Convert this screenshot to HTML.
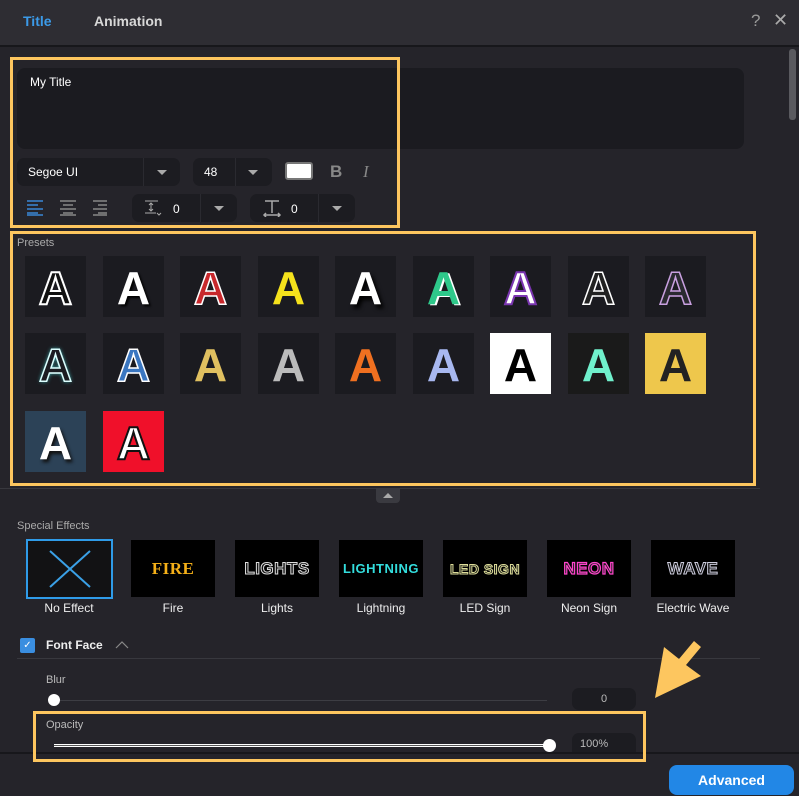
<!DOCTYPE html>
<html><head><meta charset="utf-8"><style>
*{margin:0;padding:0;box-sizing:border-box}
body{width:799px;height:796px;background:#25242a;font-family:"Liberation Sans",sans-serif;color:#ddd;position:relative;overflow:hidden;font-size:12px}
.a{position:absolute}
.yb{position:absolute;border:3px solid #fdc65f}
.fld{position:absolute;background:#1c1c21;border-radius:7px;color:#fff;font-size:12px}
.dv{position:absolute;top:0;bottom:0;width:1px;background:#2a2a30}
.tri{position:absolute;width:0;height:0;border-left:5px solid transparent;border-right:5px solid transparent;border-top:5px solid #aaa}
.t{position:absolute;width:61px;height:61px;background:#1b1b20;display:flex;align-items:center;justify-content:center;font:bold 46px "Liberation Sans",sans-serif;line-height:1;padding-top:2px}
.fx{position:absolute;width:84px;height:57px;background:#000;top:540px;display:flex;align-items:center;justify-content:center;font:bold 17px "Liberation Sans",sans-serif;letter-spacing:0.5px}
.fl{position:absolute;top:601px;width:100px;text-align:center;font-size:12px;color:#eee}
</style></head><body>
<div class="a" style="left:0;top:0;width:799px;height:45px;background:#2e2d33"></div>
<div class="a" style="left:0;top:45px;width:799px;height:2px;background:#17171b"></div>
<div class="a" style="left:23px;top:13px;font-weight:bold;font-size:14px;color:#3b9ae8">Title</div>
<div class="a" style="left:94px;top:13px;font-weight:bold;font-size:14px;color:#d8d8d8">Animation</div>
<div class="a" style="left:751px;top:11px;font-size:17px;color:#999">?</div>
<div class="a" style="left:773px;top:10px;font-size:18px;color:#aaa">✕</div>
<div class="a" style="left:789px;top:49px;width:7px;height:71px;background:#5a5a5f;border-radius:3px"></div>

<div class="a" style="left:17px;top:68px;width:727px;height:81px;background:#1b1b20;border-radius:8px"></div>
<div class="a" style="left:30px;top:75px;color:#fff;font-size:12px">My Title</div>

<div class="fld" style="left:17px;top:158px;width:163px;height:28px"><span class="a" style="left:11px;top:7px">Segoe UI</span><div class="dv" style="left:126px"></div><div class="tri" style="left:140px;top:12px"></div></div>
<div class="fld" style="left:193px;top:158px;width:79px;height:28px"><span class="a" style="left:11px;top:7px">48</span><div class="dv" style="left:42px"></div><div class="tri" style="left:55px;top:12px"></div></div>
<div class="a" style="left:285px;top:162px;width:28px;height:18px;background:#fff;border:2px solid #777;border-radius:3px"></div>
<div class="a" style="left:330px;top:162px;font-weight:bold;font-size:17px;color:#888">B</div>
<div class="a" style="left:363px;top:162px;font-style:italic;font-size:17px;color:#888;font-family:'Liberation Serif',serif">I</div>
<svg class="a" style="left:27px;top:200px" width="80" height="16"><g stroke-width="2"><g stroke="#3a86d6"><path d="M0 1h16M0 5h11M0 9h16M0 13h11M0 15h16" stroke-width="1.5"/></g><g stroke="#888" stroke-width="1.5"><path d="M33 1h16M36 5h10M33 9h16M36 13h10M33 15h16"/><path d="M66 1h16M71 5h11M66 9h16M71 13h11M66 15h16"/></g></g></svg>
<div class="fld" style="left:132px;top:194px;width:105px;height:28px"><svg class="a" style="left:12px;top:6px" width="18" height="16"><path d="M1 1h13M1 13h11M7 3v8M5 5l2-2 2 2M5 9l2 2 2-2M13 13l2 2 2-2" stroke="#aaa" fill="none"/></svg><span class="a" style="left:41px;top:8px">0</span><div class="dv" style="left:68px"></div><div class="tri" style="left:82px;top:12px"></div></div>
<div class="fld" style="left:250px;top:194px;width:105px;height:28px"><svg class="a" style="left:12px;top:5px" width="20" height="18"><path d="M3 2h14M10 2v12M2 16h16M4 14l-2 2 2 2M16 14l2 2-2 2" stroke="#aaa" fill="none" stroke-width="1.5"/></svg><span class="a" style="left:41px;top:8px">0</span><div class="dv" style="left:68px"></div><div class="tri" style="left:82px;top:12px"></div></div>
<div class="yb" style="left:10px;top:57px;width:390px;height:171px"></div>

<div class="a" style="left:17px;top:237px;font-size:11px;color:#aaa">Presets</div>
<div class="t" style="left:25px;top:256px;color:#111;-webkit-text-stroke:2px #fff">A</div>
<div class="t" style="left:103px;top:256px;color:#fff;text-shadow:2px 2px 2px #000">A</div>
<div class="t" style="left:180px;top:256px;color:#c8282c;-webkit-text-stroke:1.5px #fff">A</div>
<div class="t" style="left:258px;top:256px;color:#f5e21c">A</div>
<div class="t" style="left:335px;top:256px;color:#fff;text-shadow:3px 4px 4px #000">A</div>
<div class="t" style="left:413px;top:256px;color:#2ec88a;text-shadow:2px 1px 0 #fff">A</div>
<div class="t" style="left:490px;top:256px;color:#fff;-webkit-text-stroke:2px #7a35b0">A</div>
<div class="t" style="left:568px;top:256px;color:#222;-webkit-text-stroke:1.5px #fff">A</div>
<div class="t" style="left:645px;top:256px;color:#2a2a30;-webkit-text-stroke:1.5px #c9a0e0">A</div>
<div class="t" style="left:25px;top:333px;color:#1c1c22;-webkit-text-stroke:1.5px #dff;text-shadow:0 0 4px #4cc">A</div>
<div class="t" style="left:103px;top:333px;color:#3a76c0;-webkit-text-stroke:1.5px #fff">A</div>
<div class="t" style="left:180px;top:333px;color:#e0c060">A</div>
<div class="t" style="left:258px;top:333px;color:#bbb">A</div>
<div class="t" style="left:335px;top:333px;color:#f07020">A</div>
<div class="t" style="left:413px;top:333px;color:#a8b8f0">A</div>
<div class="t" style="left:490px;top:333px;background:#fff;color:#000">A</div>
<div class="t" style="left:568px;top:333px;background:#1a1a1a;color:#70f0cc">A</div>
<div class="t" style="left:645px;top:333px;background:#eec74c;color:#222">A</div>
<div class="t" style="left:25px;top:411px;background:#2c4257;color:#fff;text-shadow:2px 3px 3px #111">A</div>
<div class="t" style="left:103px;top:411px;background:#f0102a;color:#fff;-webkit-text-stroke:2px #111">A</div>
<div class="yb" style="left:10px;top:231px;width:746px;height:255px"></div>
<div class="a" style="left:0;top:488px;width:760px;height:1px;background:#38383e"></div>
<div class="a" style="left:376px;top:488px;width:24px;height:15px;background:#3a3a40;border-radius:0 0 4px 4px"></div>
<div class="a" style="left:383px;top:493px;width:0;height:0;border-left:5px solid transparent;border-right:5px solid transparent;border-bottom:5px solid #aaa"></div>

<div class="a" style="left:17px;top:520px;font-size:11px;color:#aaa">Special Effects</div>
<div class="fx" style="left:26px;top:539px;width:87px;height:60px;background:#121214;border:2px solid #2f9be8"><svg width="50" height="40"><path d="M5 2l40 36M45 2L5 38" stroke="#3aa0e6" stroke-width="2"/></svg></div>
<div class="fx" style="left:131px;color:#f5b018;font-family:'Liberation Serif',serif">FIRE</div>
<div class="fx" style="left:235px;color:#111;-webkit-text-stroke:1px #ddd">LIGHTS</div>
<div class="fx" style="left:339px;color:#3dd;font-size:13px">LIGHTNING</div>
<div class="fx" style="left:443px;color:#111;-webkit-text-stroke:1px #dd9;font-size:14px">LED SIGN</div>
<div class="fx" style="left:547px;color:#222;-webkit-text-stroke:1.2px #f4c">NEON</div>
<div class="fx" style="left:651px;color:#111;-webkit-text-stroke:1px #ccd">WAVE</div>
<div class="fl" style="left:19px">No Effect</div>
<div class="fl" style="left:123px">Fire</div>
<div class="fl" style="left:227px">Lights</div>
<div class="fl" style="left:331px">Lightning</div>
<div class="fl" style="left:435px">LED Sign</div>
<div class="fl" style="left:539px">Neon Sign</div>
<div class="fl" style="left:643px">Electric Wave</div>

<div class="a" style="left:20px;top:638px;width:15px;height:15px;background:#3a8ee0;border-radius:2px;color:#fff;font-size:10px;text-align:center;line-height:15px">✓</div>
<div class="a" style="left:46px;top:638px;font-weight:bold;font-size:12px;color:#eee">Font Face</div>
<svg class="a" style="left:115px;top:640px" width="14" height="10"><path d="M1 8l6-6 6 6" stroke="#888" fill="none" stroke-width="1.2"/></svg>
<div class="a" style="left:17px;top:658px;width:743px;height:1px;background:#38383e"></div>
<div class="a" style="left:46px;top:674px;font-size:11px;color:#bbb">Blur</div>
<div class="a" style="left:54px;top:700px;width:493px;height:1px;background:#3d3d43"></div>
<div class="a" style="left:48px;top:694px;width:12px;height:12px;border-radius:50%;background:#fff"></div>
<div class="fld" style="left:572px;top:688px;width:64px;height:22px;color:#bbb;text-align:center;line-height:22px;font-size:11px">0</div>

<div class="a" style="left:46px;top:719px;font-size:11px;color:#bbb">Opacity</div>
<div class="a" style="left:54px;top:744px;width:495px;height:3px;background:#fff;border-top:1px solid #fff;border-bottom:1px solid #fff;background:#555"></div>
<div class="a" style="left:543px;top:739px;width:13px;height:13px;border-radius:50%;background:#fff"></div>
<div class="fld" style="left:572px;top:733px;width:64px;height:20px;color:#bbb;line-height:22px;font-size:11px;padding-left:8px;border-radius:7px 7px 0 0">100%</div>
<div class="a" style="left:0;top:752px;width:799px;height:44px;background:#25242a;border-top:2px solid #17171b"></div>
<div class="yb" style="left:33px;top:711px;width:613px;height:51px"></div>
<div class="a" style="left:669px;top:765px;width:125px;height:30px;background:#2287e6;border-radius:8px;color:#fff;font-weight:bold;font-size:14px;text-align:center;line-height:30px">Advanced</div>
<svg class="a" style="left:0;top:0" width="799" height="796"><polygon points="655,698 664,647 679,659 694,641 701,647 686,665 701,676" fill="#fdc65f"/></svg>
</body></html>
